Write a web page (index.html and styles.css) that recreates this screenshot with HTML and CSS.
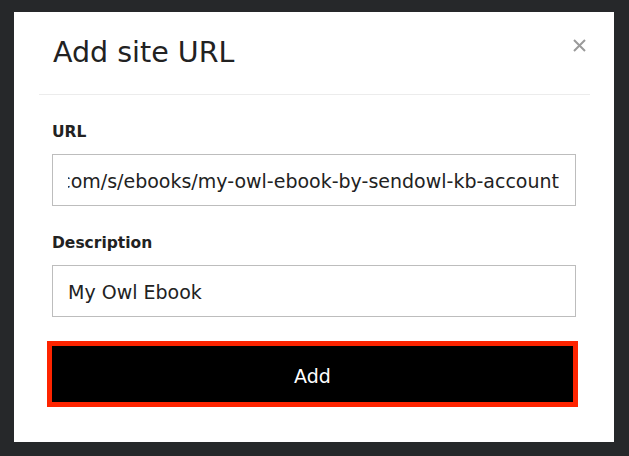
FILE: index.html
```html
<!DOCTYPE html>
<html lang="en">
<head>
<meta charset="utf-8">
<title>Add site URL</title>
<link rel="stylesheet" href="styles.css">
</head>
<body>
<div class="modal">
  <div class="modal-header">
    <h2 class="modal-title">Add site URL</h2>
    <button class="close" aria-label="Close">
      <svg width="13" height="13" viewBox="0 0 13 13"><path d="M1 1L12 12M12 1L1 12" stroke="#9a9a9a" stroke-width="2" fill="none"/></svg>
    </button>
  </div>
  <div class="modal-body">
    <label class="field-label">URL</label>
    <div class="input">
      <div class="input-clip"><span class="input-text">https://www.sendowl.com/s/ebooks/my-owl-ebook-by-sendowl-kb-account</span></div>
    </div>
    <label class="field-label">Description</label>
    <div class="input">
      <div class="input-clip start"><span class="input-text">My Owl Ebook</span></div>
    </div>
    <div class="btn-wrap">
      <button class="btn-add">Add</button>
    </div>
  </div>
</div>
</body>
</html>
```
FILE: styles.css
```css
* { box-sizing: border-box; }
html, body { margin: 0; padding: 0; }
body {
  background: #26282a;
  width: 629px;
  height: 456px;
  overflow: hidden;
  font-family: "DejaVu Sans", "Liberation Sans", sans-serif;
  padding: 12px 0 0 14px;
}
.modal {
  background: #fff;
  width: 600px;
  height: 430px;
  padding: 0 24px 0 25px;
}
.modal-header {
  display: flex;
  justify-content: space-between;
  align-items: flex-start;
  padding: 24px 4px 24px 14px;
  border-bottom: 1px solid #ececec;
}
.modal-title {
  margin: 0;
  font-size: 28.5px;
  line-height: 34px;
  font-weight: normal;
  color: #222;
}
.close {
  border: 0;
  background: none;
  padding: 0;
  margin-top: 3px;
  width: 13px;
  height: 13px;
  display: flex;
}
.modal-body {
  padding: 27px 14px 0 13px;
  display: flex;
  flex-direction: column;
}
.field-label {
  display: block;
  font-size: 15.5px;
  line-height: 20px;
  font-weight: bold;
  color: #222;
  margin-bottom: 12px;
}
.input {
  height: 52px;
  border: 1px solid #bdbdbd;
  padding: 0 16px 0 15px;
  display: flex;
  align-items: center;
  margin-bottom: 27px;
}
.input-clip {
  flex: 1;
  overflow: hidden;
  display: flex;
  justify-content: flex-end;
  white-space: nowrap;
}
.input-clip.start { justify-content: flex-start; }
.input-text {
  font-size: 19px;
  line-height: 24px;
  color: #222;
  flex: none;
  padding-top: 1px;
}
.btn-wrap {
  margin: -3px -2px 0 -5px;
  border: 5px solid #fe2400;
}
.btn-add {
  display: block;
  width: 100%;
  height: 56px;
  border: 0;
  background: #000;
  color: #fff;
  font-family: "DejaVu Sans", "Liberation Sans", sans-serif;
  font-size: 19px;
  padding: 3px 0 0;
}
```
